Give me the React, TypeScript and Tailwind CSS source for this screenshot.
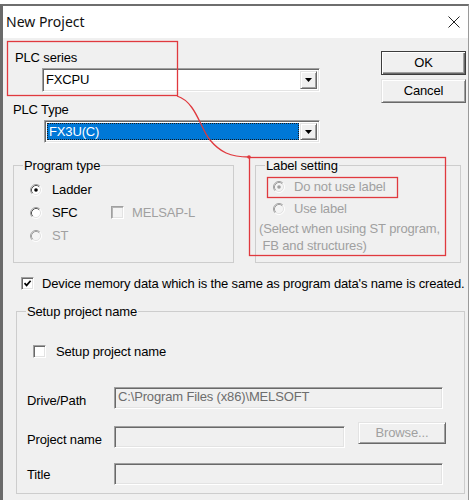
import React from "react";

function Radio({ checked, disabled }: { checked?: boolean; disabled?: boolean }) {
  return (
    <svg width="12" height="12" viewBox="0 0 12 12" className="shrink-0">
      <circle cx="6" cy="6" r="5" fill={disabled ? "#f4f4f4" : "#ffffff"} />
      <path d="M2.11 9.89 A5.5 5.5 0 0 1 9.89 2.11" fill="none" stroke="#a0a0a0" strokeWidth="1" />
      <path d="M2.82 9.18 A4.5 4.5 0 0 1 9.18 2.82" fill="none" stroke={disabled ? "#a0a0a0" : "#555555"} strokeWidth="1" />
      <path d="M9.89 2.11 A5.5 5.5 0 0 1 2.11 9.89" fill="none" stroke="#ffffff" strokeWidth="1" />
      <path d="M9.18 2.82 A4.5 4.5 0 0 1 2.82 9.18" fill="none" stroke="#e3e3e3" strokeWidth="1" />
      {checked && <circle cx="6" cy="6" r="1.8" fill={disabled ? "#a0a0a0" : "#000000"} />}
    </svg>
  );
}

function Check({ checked, disabled }: { checked?: boolean; disabled?: boolean }) {
  return (
    <div
      className={`w-[13px] h-[13px] shrink-0 border border-t-[#a0a0a0] border-l-[#a0a0a0] border-r-white border-b-white flex items-center justify-center ${
        disabled
          ? "bg-[#f4f4f4] shadow-[inset_1px_1px_0_#b5b5b5,inset_-1px_-1px_0_#e3e3e3]"
          : "bg-white shadow-[inset_1px_1px_0_#696969,inset_-1px_-1px_0_#e3e3e3]"
      }`}
    >
      {checked && (
        <svg width="9" height="9" viewBox="0 0 9 9">
          <path d="M1.5 4.2 L3.6 6.4 L7.6 1.8" fill="none" stroke="#000" strokeWidth="1.7" />
        </svg>
      )}
    </div>
  );
}

function DropBtn() {
  return (
    <div className="w-[17px] h-full shrink-0 bg-[#f0f0f0] border border-t-[#e3e3e3] border-l-[#e3e3e3] border-r-[#696969] border-b-[#696969] shadow-[inset_1px_1px_0_#ffffff,inset_-1px_-1px_0_#a0a0a0] flex items-center justify-center">
      <svg width="7" height="4" viewBox="0 0 7 4">
        <polygon points="0,0 7,0 3.5,4" fill="#000" />
      </svg>
    </div>
  );
}

const sunken =
  "border border-t-[#a0a0a0] border-l-[#a0a0a0] border-r-white border-b-white shadow-[inset_1px_1px_0_#696969,inset_-1px_-1px_0_#e3e3e3]";

export default function App() {
  return (
    <div className="relative w-[474px] h-[500px] bg-white overflow-hidden font-['Liberation_Sans',Arial,sans-serif] text-[13px] tracking-[-0.15px] text-black">
      <div className="mt-[4px] w-[469px] h-[496px] flex flex-col border-t-2 border-l-[3px] border-r border-t-[#6e6e6e] border-l-[#6a6a6a] border-r-[#9a9a9a]">
        {/* Title bar */}
        <div className="h-[32px] shrink-0 bg-white flex items-center justify-between pl-[3px] pr-[8px]">
          <span className="font-['Noto_Sans',sans-serif] text-[14px] leading-[18px] tracking-normal text-[#111]">New Project</span>
          <svg width="12" height="12" viewBox="0 0 12 12">
            <path d="M0.5 0.5 L11.5 11.5 M11.5 0.5 L0.5 11.5" stroke="#222" strokeWidth="1" />
          </svg>
        </div>

        {/* Body */}
        <div className="flex-1 bg-[#f0f0f0] flex flex-col">
          {/* Top section */}
          <div className="flex">
            <div className="flex flex-col">
              <div className="mt-[12px] ml-[12px] leading-[15px]">PLC series</div>
              <div className={`mt-[3px] ml-[39px] w-[278px] h-[24px] bg-white ${sunken} flex p-[2px]`}>
                <div className="flex-1 pl-[1px] leading-[18px] flex items-center">FXCPU</div>
                <DropBtn />
              </div>
              <div className="mt-[10px] ml-[10px] leading-[15px]">PLC Type</div>
              <div className={`mt-[3px] ml-[41px] w-[276px] h-[23px] bg-white ${sunken} flex p-[2px]`}>
                <div className="flex-1 mr-[1px] bg-[#0078d7] border border-dotted border-[#1a1a1a] text-white pl-[1px] flex items-center leading-[15px]">
                  FX3U(C)
                </div>
                <DropBtn />
              </div>
            </div>
            <div className="ml-[61px] flex flex-col">
              <div className="mt-[13px] w-[85px] h-[24px] border border-[#3c3c3c] bg-[#f0f0f0] shadow-[inset_1px_1px_0_#ffffff,inset_-1px_-1px_0_#696969,inset_-2px_-2px_0_#a0a0a0] flex items-center justify-center">
                OK
              </div>
              <div className="mt-[4px] w-[85px] h-[24px] border border-t-[#e3e3e3] border-l-[#e3e3e3] border-r-[#696969] border-b-[#696969] bg-[#f0f0f0] shadow-[inset_1px_1px_0_#ffffff,inset_-1px_-1px_0_#a0a0a0] flex items-center justify-center">
                Cancel
              </div>
            </div>
          </div>

          {/* Group row */}
          <div className="mt-[15px] ml-[10px] flex gap-[21px]">
            <fieldset className="w-[221px] h-[105px] border border-[#cdcdcd] p-0 m-0">
              <legend className="ml-[9px] px-[1px] leading-[15px]">Program type</legend>
              <div className="mt-[5px] pl-[16px] flex flex-col">
                <div className="h-[23px] flex items-center gap-[10px]">
                  <Radio checked />
                  <span>Ladder</span>
                </div>
                <div className="h-[23px] flex items-center">
                  <Radio />
                  <span className="ml-[10px] w-[59px]">SFC</span>
                  <div className="flex items-center gap-[8px]">
                    <Check disabled />
                    <span className="text-[#a0a0a0]">MELSAP-L</span>
                  </div>
                </div>
                <div className="h-[23px] flex items-center gap-[10px]">
                  <Radio disabled />
                  <span className="text-[#a0a0a0]">ST</span>
                </div>
              </div>
            </fieldset>
            <fieldset className="w-[206px] h-[105px] border border-[#cdcdcd] p-0 m-0">
              <legend className="ml-[9px] px-[1px] leading-[15px]">Label setting</legend>
              <div className="mt-[3px] flex flex-col text-[#a0a0a0]">
                <div className="h-[22px] pl-[17px] flex items-center gap-[9px]">
                  <Radio checked disabled />
                  <span>Do not use label</span>
                </div>
                <div className="h-[22px] pl-[17px] flex items-center gap-[9px]">
                  <Radio disabled />
                  <span>Use label</span>
                </div>
                <div className="pl-[3px] leading-[17px]">(Select when using ST program,</div>
                <div className="pl-[3px] leading-[17px]">&nbsp;FB and structures)</div>
              </div>
            </fieldset>
          </div>

          {/* Device memory checkbox */}
          <div className="mt-[12px] ml-[18px] h-[16px] flex items-center gap-[8px]">
            <Check checked />
            <span className="leading-[15px] whitespace-nowrap">
              Device memory data which is the same as program data's name is created.
            </span>
          </div>

          {/* Setup project name */}
          <fieldset className="mt-[13px] ml-[13px] w-[449px] h-[190px] border border-[#cdcdcd] p-0">
            <legend className="ml-[9px] px-[1px] leading-[15px]">Setup project name</legend>
            <div className="mt-[24px] pl-[16px] h-[16px] flex items-center gap-[10px]">
              <Check />
              <span className="leading-[15px]">Setup project name</span>
            </div>
            <div className="mt-[28px] flex items-start">
              <div className="w-[97px] pl-[10px] mt-[6px] leading-[15px]">Drive/Path</div>
              <div className={`w-[329px] h-[22px] bg-[#f0f0f0] ${sunken} pl-[3px] flex items-center pb-[3px] text-[#6d6d6d]`}>
                C:\Program Files (x86)\MELSOFT
              </div>
            </div>
            <div className="mt-[13px] flex items-start">
              <div className="w-[97px] pl-[10px] mt-[10px] leading-[15px]">Project name</div>
              <div className={`mt-[4px] w-[231px] h-[22px] bg-[#f0f0f0] ${sunken}`} />
              <div className="ml-[13px] w-[88px] h-[22px] border border-t-[#e3e3e3] border-l-[#e3e3e3] border-r-[#696969] border-b-[#696969] bg-[#f0f0f0] shadow-[inset_1px_1px_0_#ffffff,inset_-1px_-1px_0_#a0a0a0] flex items-center justify-center text-[#a0a0a0]">
                Browse...
              </div>
            </div>
            <div className="mt-[15px] flex items-start">
              <div className="w-[97px] pl-[10px] mt-[4px] leading-[15px]">Title</div>
              <div className={`w-[329px] h-[22px] bg-[#f0f0f0] ${sunken}`} />
            </div>
          </fieldset>
        </div>
      </div>

      {/* Red annotations (overlay drawing) */}
      <svg className="absolute left-0 top-0 pointer-events-none" width="474" height="500" viewBox="0 0 474 500">
        <g fill="none" stroke="#e0393e" strokeWidth="1.3">
          <rect x="7.5" y="41.5" width="170" height="54" />
          <rect x="249.5" y="157.5" width="196" height="98" />
          <rect x="267.5" y="177.5" width="130" height="20" />
          <path d="M177 96 C196 102 200 128 210 140 S230 157 249 157" />
        </g>
        <circle cx="249" cy="157" r="1.8" fill="#e0393e" />
      </svg>
    </div>
  );
}
